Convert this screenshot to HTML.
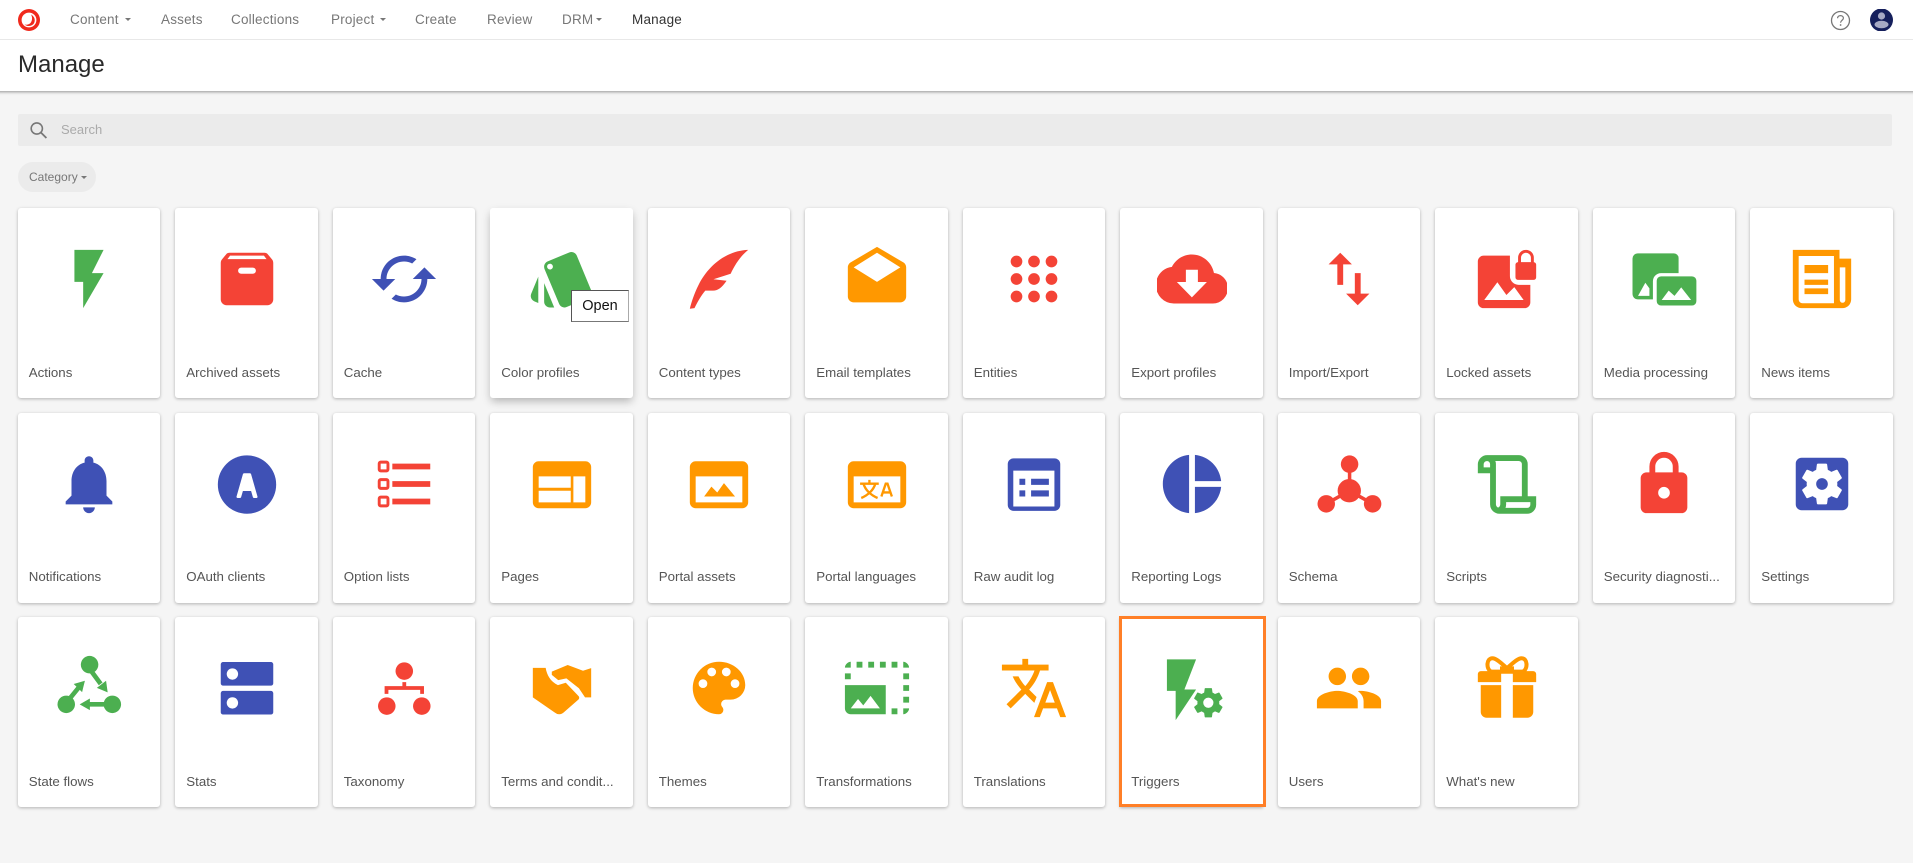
<!DOCTYPE html>
<html><head><meta charset="utf-8"><title>Manage</title>
<style>
html,body{margin:0;padding:0;width:1913px;height:863px;overflow:hidden;background:#f5f5f5;font-family:"Liberation Sans",sans-serif}
.top{position:absolute;left:0;top:0;width:1913px;height:39px;background:#fff;border-bottom:1px solid #e8e8e8}
.nav{position:absolute;top:10px;line-height:19px;font-size:13.5px;letter-spacing:.2px;color:#777;white-space:nowrap}
.caret{position:absolute;width:0;height:0;border-left:3px solid transparent;border-right:3px solid transparent;border-top:3px solid #777}
.bar{position:absolute;left:-6px;top:40px;width:1925px;height:51px;background:#fff;box-shadow:0 2px 3px -1px rgba(0,0,0,.4)}
.title{position:absolute;left:18px;top:49px;font-size:24px;line-height:32px;color:#2a2a2a}
.search{position:absolute;left:18px;top:114px;width:1874px;height:32px;background:#ebebeb;border-radius:2px}
.ph{position:absolute;left:61px;top:121px;font-size:13px;line-height:18px;color:#aaa}
.pill{position:absolute;left:18px;top:162px;width:78px;height:30px;border-radius:15px;background:#ebebeb}
.cat{position:absolute;left:29px;top:168px;font-size:12px;line-height:18px;color:#777}
.grid{position:absolute;left:17.75px;top:208px;width:1875px;display:grid;grid-template-columns:repeat(12,142.5px);column-gap:15px;grid-auto-rows:190px;row-gap:14.5px}
.card{position:relative;background:#fff;border-radius:3px;box-shadow:0 1px 3px rgba(0,0,0,.28)}
.card svg{position:absolute;left:36.25px;top:36px;width:70px;height:70px}
.card span{position:absolute;left:11px;top:156px;font-size:13.3px;line-height:18px;color:#555;white-space:nowrap}
.card:nth-child(n+13):nth-child(-n+24) span{top:155px}
.hov{box-shadow:0 4px 9px -1px rgba(0,0,0,.28)}
.sel{border-radius:0}
.sel i{position:absolute;left:-1px;top:-1px;width:147px;height:191px;box-sizing:border-box;border:3px solid #ff7f27}
.g{fill:#4caf50}.r{fill:#f44336}.b{fill:#3f51b5}.o{fill:#ff9800}
.tip{position:absolute;left:571px;top:290px;width:56px;height:30px;background:#fff;border:1px solid #555;border-right-color:#aaa;border-bottom-color:#777;font-size:14.5px;line-height:30px;color:#111;text-align:center}
</style></head><body>
<div class="bar"></div>
<div class="top"></div>
<svg style="position:absolute;left:18px;top:9px" width="22" height="22" viewBox="0 0 22 22"><circle cx="11" cy="11" r="11" fill="#f02a1d"/><circle cx="11" cy="11" r="7.4" fill="#fff"/><path d="M13 5.5C14.5 8 14.5 11.5 12.5 14C11 15.6 8.5 16 6.5 15.5C9 17.7 13 17.6 15.5 15C17.8 12 17 7.6 13 5.5Z" fill="#f02a1d"/></svg>
<div class="nav" style="left:70px">Content</div><i class="caret" style="left:125px;top:18px"></i>
<div class="nav" style="left:161px">Assets</div>
<div class="nav" style="left:231px">Collections</div>
<div class="nav" style="left:331px">Project</div><i class="caret" style="left:380px;top:18px"></i>
<div class="nav" style="left:415px">Create</div>
<div class="nav" style="left:487px">Review</div>
<div class="nav" style="left:562px">DRM</div><i class="caret" style="left:596px;top:18px"></i>
<div class="nav" style="left:632px;color:#333">Manage</div>
<svg style="position:absolute;left:1830px;top:10px" width="21" height="21" viewBox="0 0 21 21"><circle cx="10.5" cy="10.5" r="9" fill="none" stroke="#777" stroke-width="1.3"/><path d="M7.6 8.2C7.6 6.5 9 5.6 10.5 5.6C12.1 5.6 13.4 6.6 13.4 8.1C13.4 10.2 10.6 10.3 10.6 12.7" fill="none" stroke="#777" stroke-width="1.2"/><circle cx="10.6" cy="15" r=".9" fill="#777"/></svg>
<svg style="position:absolute;left:1870px;top:9px" width="23" height="22" viewBox="0 0 23 22"><circle cx="11.5" cy="11" r="11.5" fill="#151f5c"/><circle cx="11.5" cy="7" r="3.6" fill="#a6a9c4"/><ellipse cx="11.5" cy="15.5" rx="7" ry="3.7" fill="#a6a9c4"/></svg>
<div class="title">Manage</div>
<div class="search"></div>
<svg style="position:absolute;left:29px;top:121px" width="19" height="18" viewBox="0 0 19 18"><circle cx="7.8" cy="7.5" r="5.6" fill="none" stroke="#777" stroke-width="1.6"/><path d="M12 11.6L17.4 17" stroke="#777" stroke-width="1.8"/></svg>
<div class="ph">Search</div>
<div class="pill"></div><div class="cat">Category</div><i class="caret" style="left:81px;top:176px"></i>

<div class="grid">
<div class="card"><svg viewBox="0 0 24 24"><path class="g" d="M7,2V13H10V22L17,10H13L17,2H7Z"/></svg><span>Actions</span></div>
<div class="card"><svg viewBox="0 0 24 24"><path class="r" fill-rule="evenodd" d="M20.54,5.23L19.15,3.55C18.88,3.21 18.47,3 18,3H6C5.53,3 5.12,3.21 4.84,3.55L3.46,5.23C3.17,5.57 3,6 3,6.5V19A2,2 0 0,0 5,21H19A2,2 0 0,0 21,19V6.5C21,6 20.83,5.57 20.54,5.23M5.3,5.2L6.2,4H17.8L18.7,5.2H5.3ZM10,8.1H14A1,1 0 0 1 14,10.2H10A1,1 0 0 1 10,8.1Z"/></svg><span>Archived assets</span></div>
<div class="card"><svg viewBox="0 0 24 24"><path class="b" d="M19 8l-4 4h3c0 3.31-2.69 6-6 6-1.01 0-1.97-.25-2.8-.7l-1.46 1.46C8.97 19.54 10.43 20 12 20c4.42 0 8-3.58 8-8h3l-4-4zM6 12c0-3.31 2.69-6 6-6 1.01 0 1.97.25 2.8.7l1.46-1.46C15.03 4.46 13.57 4 12 4c-4.42 0-8 3.58-8 8H1l4 4 4-4H6z"/></svg><span>Cache</span></div>
<div class="card hov"><svg viewBox="0 0 24 24"><path class="g" d="M2.53,19.65L3.87,20.21V11.18L1.44,17.04C1.03,18.06 1.5,19.23 2.53,19.65M22.03,15.95L17.07,4C16.76,3.23 16.03,2.77 15.26,2.75C15,2.75 14.73,2.79 14.47,2.9L7.1,5.95C6.35,6.26 5.89,6.97 5.87,7.75C5.86,8 5.91,8.29 6,8.55L11,20.5C11.29,21.28 12.03,21.74 12.81,21.75C13.07,21.75 13.33,21.7 13.58,21.6L20.94,18.55C21.96,18.13 22.45,16.96 22.03,15.95M7.88,8.75A1,1 0 0,1 6.88,7.75A1,1 0 0,1 7.88,6.75C8.43,6.75 8.88,7.2 8.88,7.75C8.88,8.3 8.43,8.75 7.88,8.75M5.88,19.75A2,2 0 0,0 7.88,21.75H9.33L5.88,13.41V19.75Z"/></svg><span>Color profiles</span></div>
<div class="card"><svg viewBox="0 0 24 24"><path class="r" d="M22,2C14,2.3 8,8 5,14C3.5,17 2.5,20 2,22.2L3.6,22C4.8,19.6 6,17.5 7.3,16H10C11.5,16 13,15 14.6,12.6L10.1,12.1L16,10.2C17.5,7 19.5,4 22,2Z"/></svg><span>Content types</span></div>
<div class="card"><svg viewBox="0 0 24 24"><path class="o" fill-rule="evenodd" d="M4,8L12,13L20,8L12,3L4,8ZM22,8V18A2,2 0 0,1 20,20H4A2,2 0 0,1 2,18V8C2,7.27 2.39,6.64 2.97,6.29L12,1L21.03,6.29C21.61,6.64 22,7.27 22,8Z"/></svg><span>Email templates</span></div>
<div class="card"><svg viewBox="0 0 24 24"><g class="r"><circle cx="6" cy="6" r="2"/><circle cx="12" cy="6" r="2"/><circle cx="18" cy="6" r="2"/><circle cx="6" cy="12" r="2"/><circle cx="12" cy="12" r="2"/><circle cx="18" cy="12" r="2"/><circle cx="6" cy="18" r="2"/><circle cx="12" cy="18" r="2"/><circle cx="18" cy="18" r="2"/></g></svg><span>Entities</span></div>
<div class="card"><svg viewBox="0 0 24 24"><path class="r" fill-rule="evenodd" transform="translate(-.4 -.6) scale(1.03 1.05)" d="M17,13L12,18L7,13H10V9H14V13H17ZM19.35,10.03C18.67,6.59 15.64,4 12,4C9.11,4 6.6,5.64 5.35,8.03C2.34,8.36 0,10.9 0,14A6,6 0 0,0 6,20H19A5,5 0 0,0 24,15C24,12.36 21.95,10.22 19.35,10.03Z"/></svg><span>Export profiles</span></div>
<div class="card"><svg viewBox="0 0 24 24"><path class="r" d="M9 3L5 6.99h3V14h2V6.99h3L9 3zm7 14.01V10h-2v7.01h-3L15 21l4-3.99h-3z"/></svg><span>Import/Export</span></div>
<div class="card"><svg viewBox="0 0 24 24"><path class="r" fill-rule="evenodd" d="M4,4H13V11A3,3 0 0 0 16,14H20V20A2,2 0 0 1 18,22H4A2,2 0 0 1 2,20V6A2,2 0 0 1 4,4ZM4.2,19.2H17.7L14.5,14.8L11.8,17.5L8.7,13.1Z"/><rect class="r" x="14.9" y="6.2" width="7.1" height="6.1" rx=".9"/><path d="M16.3,6.5V4.7a2.2,2.2 0 0 1 4.4,0V6.5" fill="none" stroke="#f44336" stroke-width="1"/></svg><span>Locked assets</span></div>
<div class="card"><svg viewBox="0 0 24 24"><path class="g" fill-rule="evenodd" d="M3,3.2H15.4A1.6,1.6 0 0 1 17,4.8V10H11A2.8,2.8 0 0 0 8.2,12.8V19H3A1.8,1.8 0 0 1 1.2,17.2V5A1.8,1.8 0 0 1 3,3.2ZM3.1,17.8H7V15.2L5.6,13.3Z"/><path class="g" fill-rule="evenodd" d="M11,11.1H21.6A1.5,1.5 0 0 1 23.1,12.6V19.6A1.5,1.5 0 0 1 21.6,21.1H11A1.5,1.5 0 0 1 9.5,19.6V12.6A1.5,1.5 0 0 1 11,11.1ZM11.2,19.2H21.3L17.9,14.85L15.6,17.8L13.6,16Z"/></svg><span>Media processing</span></div>
<div class="card"><svg viewBox="0 0 24 24"><path class="o" fill-rule="evenodd" d="M2,2H18V5H22V19A3,3 0 0 1 19,22H5A3,3 0 0 1 2,19ZM4,4.1V19A1.3,1.3 0 0 0 5.3,20.3H16.1V4.1ZM18.1,8V19.2A.95,.95 0 0 0 20,19.2V8ZM6,7.2H14.1V10H6ZM6,12.2H14.1V14H6ZM6,15.2H14.1V17.2H6Z"/></svg><span>News items</span></div>

<div class="card"><svg viewBox="0 0 24 24"><path class="b" d="M12 22c1.1 0 2-.9 2-2h-4c0 1.1.89 2 2 2zm6-6v-5c0-3.07-1.64-5.64-4.5-6.32V4c0-.83-.67-1.5-1.5-1.5s-1.5.67-1.5 1.5v.68C7.63 5.36 6 7.92 6 11v5l-2 2v1h16v-1l-2-2z"/></svg><span>Notifications</span></div>
<div class="card"><svg viewBox="0 0 24 24"><circle class="b" cx="12" cy="12.2" r="10"/><path d="M11,8.7H13L15.2,16.4H14.4L13.7,14H10.3L9.6,16.4H8.8Z" fill="#fff" stroke="#fff" stroke-width=".8" stroke-linejoin="round"/></svg><span>OAuth clients</span></div>
<div class="card"><svg viewBox="0 0 24 24"><path class="r" fill-rule="evenodd" d="M21,19V17H8V19H21M21,13V11H8V13H21M8,7H21V5H8V7M4,5V7H6V5H4M3,5A1,1 0 0,1 4,4H6A1,1 0 0,1 7,5V7A1,1 0 0,1 6,8H4A1,1 0 0,1 3,7V5M4,11V13H6V11H4M3,11A1,1 0 0,1 4,10H6A1,1 0 0,1 7,11V13A1,1 0 0,1 6,14H4A1,1 0 0,1 3,13V11M4,17V19H6V17H4M3,17A1,1 0 0,1 4,16H6A1,1 0 0,1 7,17V19A1,1 0 0,1 6,20H4A1,1 0 0,1 3,19V17Z"/></svg><span>Option lists</span></div>
<div class="card"><svg viewBox="0 0 24 24"><path class="o" fill-rule="evenodd" d="M4,4.2H20A2,2 0 0 1 22,6.2V18.3A2,2 0 0 1 20,20.3H4A2,2 0 0 1 2,18.3V6.2A2,2 0 0 1 4,4.2ZM4,9.4V13.3H15V9.4ZM4,14.3V18.3H15V14.3ZM15.9,9.4V18.3H20V9.4Z"/></svg><span>Pages</span></div>
<div class="card"><svg viewBox="0 0 24 24"><path class="o" fill-rule="evenodd" d="M4,4.2H20A2,2 0 0 1 22,6.2V18.3A2,2 0 0 1 20,20.3H4A2,2 0 0 1 2,18.3V6.2A2,2 0 0 1 4,4.2ZM4,9.4V18.3H20V9.4ZM6.9,16.3L9.4,12.9L11.4,14.9L13.7,11.7L17.5,16.3Z"/></svg><span>Portal assets</span></div>
<div class="card"><svg viewBox="0 0 24 24"><path class="o" fill-rule="evenodd" d="M4,4.2H20A2,2 0 0 1 22,6.2V18.3A2,2 0 0 1 20,20.3H4A2,2 0 0 1 2,18.3V6.2A2,2 0 0 1 4,4.2ZM4,9.4V18.3H20V9.4Z"/><path d="M6.2,11.9H12.6M9.4,10.6V11.9M7.4,12C8,14 9.8,15.8 12.2,16.8M11.4,12C10.8,14 9,15.8 6.6,16.8M13.5,16.3L15,11.9H15.6L17.1,16.3M14.1,14.9H16.5" fill="none" stroke="#ff9800" stroke-width=".8"/></svg><span>Portal languages</span></div>
<div class="card"><svg viewBox="0 0 24 24"><path class="b" fill-rule="evenodd" d="M5,3.2H19A2,2 0 0 1 21,5.2V19.2A2,2 0 0 1 19,21.2H5A2,2 0 0 1 3,19.2V5.2A2,2 0 0 1 5,3.2ZM4.9,7.4V19.7H19V7.4ZM7,10.2H9V12.3H7ZM11,10.2H17.1V12.3H11ZM7,14.2H9V16.3H7ZM11,14.2H17.1V16.3H11Z"/></svg><span>Raw audit log</span></div>
<div class="card"><svg viewBox="0 0 24 24"><path class="b" d="M11,2V22C5.9,21.5 2,17.2 2,12C2,6.8 5.9,2.5 11,2M13,2V11H22C21.5,6.2 17.8,2.5 13,2M13,13V22C17.7,21.5 21.5,17.8 22,13H13Z"/></svg><span>Reporting Logs</span></div>
<div class="card"><svg viewBox="0 0 24 24"><g class="r"><circle cx="12.2" cy="5.2" r="3"/><circle cx="12.1" cy="14.3" r="4"/><circle cx="4.2" cy="18.8" r="3"/><circle cx="20.1" cy="18.8" r="3"/></g><path d="M12.2,5.2V14.3L4.2,18.8M12.1,14.3L20.1,18.8" fill="none" stroke="#f44336" stroke-width="1.2"/></svg><span>Schema</span></div>
<div class="card"><svg viewBox="0 0 24 24"><path d="M7.2,7.3H3V5.2A2.2,2.2 0 0 1 5.2,3.1H16A2.1,2.1 0 0 1 18.1,5.2V17M5.2,3.1A2.1,2.1 0 0 1 7.2,5.2V19A2.2,2.2 0 0 0 9.4,21.2H18.9A2.1,2.1 0 0 0 21,19.1V17.2H10.7V19A2.2,2.2 0 0 1 8.7,21.2" fill="none" stroke="#4caf50" stroke-width="2"/></svg><span>Scripts</span></div>
<div class="card"><svg viewBox="0 0 24 24"><path class="r" d="M12,17A2,2 0 0,0 14,15C14,13.89 13.1,13 12,13A2,2 0 0,0 10,15A2,2 0 0,0 12,17M18,8A2,2 0 0,1 20,10V20A2,2 0 0,1 18,22H6A2,2 0 0,1 4,20V10C4,8.89 4.9,8 6,8H7V6A5,5 0 0,1 12,1A5,5 0 0,1 17,6V8H18M12,3A3,3 0 0,0 9,6V8H15V6A3,3 0 0,0 12,3Z"/></svg><span>Security diagnosti...</span></div>
<div class="card"><svg viewBox="0 0 24 24"><path class="b" fill-rule="evenodd" d="M17.25,12C17.25,12.23 17.23,12.46 17.2,12.68L18.68,13.84C18.81,13.95 18.85,14.13 18.76,14.29L17.36,16.71C17.27,16.86 17.09,16.92 16.93,16.86L15.19,16.16C14.83,16.44 14.43,16.67 14,16.85L13.75,18.7C13.72,18.87 13.57,19 13.4,19H10.6C10.43,19 10.28,18.87 10.25,18.7L10,16.85C9.56,16.67 9.17,16.44 8.81,16.16L7.07,16.86C6.91,16.92 6.73,16.86 6.64,16.71L5.24,14.29C5.15,14.13 5.19,13.95 5.32,13.84L6.8,12.68C6.77,12.46 6.75,12.23 6.75,12C6.75,11.77 6.77,11.54 6.8,11.32L5.32,10.16C5.19,10.05 5.15,9.86 5.24,9.71L6.64,7.29C6.73,7.13 6.91,7.07 7.07,7.13L8.81,7.84C9.17,7.56 9.56,7.32 10,7.15L10.25,5.29C10.28,5.13 10.43,5 10.6,5H13.4C13.57,5 13.72,5.13 13.75,5.29L14,7.15C14.43,7.32 14.83,7.56 15.19,7.84L16.93,7.13C17.09,7.07 17.27,7.13 17.36,7.29L18.76,9.71C18.85,9.86 18.81,10.05 18.68,10.16L17.2,11.32C17.23,11.54 17.25,11.77 17.25,12M19,3H5C3.89,3 3,3.89 3,5V19A2,2 0 0,0 5,21H19A2,2 0 0,0 21,19V5C21,3.89 20.1,3 19,3M12,10C10.89,10 10,10.89 10,12A2,2 0 0,0 12,14A2,2 0 0,0 14,12C14,10.89 13.1,10 12,10Z"/></svg><span>Settings</span></div>

<div class="card"><svg viewBox="0 0 24 24"><g class="g"><circle cx="12.2" cy="4" r="3"/><circle cx="4.2" cy="17.6" r="3"/><circle cx="20" cy="17.6" r="3"/><path d="M18.4,13.5L17.85,9.52L14.69,11.96Z"/><path d="M10.6,9.5L6.75,10.64L9.63,13.4Z"/><path d="M8.8,17.6L12.3,15.6V19.6Z"/></g><path d="M12.9,6.4L16,10.6M5.5,15.5L8.5,11.8M12,17.6H18" fill="none" stroke="#4caf50" stroke-width="1.6"/></svg><span>State flows</span></div>
<div class="card"><svg viewBox="0 0 24 24"><rect class="b" x="3" y="3.1" width="18" height="8.1" rx=".8"/><rect class="b" x="3" y="13" width="18" height="8.1" rx=".8"/><circle cx="7" cy="7.2" r="1.95" fill="#fff"/><circle cx="7" cy="17.1" r="1.95" fill="#fff"/></svg><span>Stats</span></div>
<div class="card"><svg viewBox="0 0 24 24"><g class="r"><circle cx="12.1" cy="6.2" r="3"/><circle cx="6.1" cy="18.2" r="3"/><circle cx="18.1" cy="18.2" r="3"/></g><path d="M12.1,10V12M6,14V12H18.2V14" fill="none" stroke="#f44336" stroke-width="1.3"/></svg><span>Taxonomy</span></div>
<div class="card"><svg viewBox="0 0 24 24"><path class="o" d="M2,5.1H6.4C6.8,7.5 8,9.8 10.6,11L13.3,10.2L17.4,14.5Q18.2,15.2 17.7,15.9L13,20Q11.2,21.8 9.5,20.4L2,15.2Z"/><path class="o" d="M8.5,6.4L13.95,4.1L19.2,6.1L22,5.2V15.2H19.9L17.8,12.1L13.5,8.7L10.7,9.3L8.5,7.5Z"/></svg><span>Terms and condit...</span></div>
<div class="card"><svg viewBox="0 0 24 24"><path class="o" d="M17.5,12A1.5,1.5 0 0,1 16,10.5A1.5,1.5 0 0,1 17.5,9A1.5,1.5 0 0,1 19,10.5A1.5,1.5 0 0,1 17.5,12M14.5,8A1.5,1.5 0 0,1 13,6.5A1.5,1.5 0 0,1 14.5,5A1.5,1.5 0 0,1 16,6.5A1.5,1.5 0 0,1 14.5,8M9.5,8A1.5,1.5 0 0,1 8,6.5A1.5,1.5 0 0,1 9.5,5A1.5,1.5 0 0,1 11,6.5A1.5,1.5 0 0,1 9.5,8M6.5,12A1.5,1.5 0 0,1 5,10.5A1.5,1.5 0 0,1 6.5,9A1.5,1.5 0 0,1 8,10.5A1.5,1.5 0 0,1 6.5,12M12,3A9,9 0 0,0 3,12A9,9 0 0,0 12,21A1.5,1.5 0 0,0 13.5,19.5C13.5,19.11 13.35,18.76 13.11,18.5C12.88,18.23 12.73,17.88 12.73,17.5A1.5,1.5 0 0,1 14.23,16H16A5,5 0 0,0 21,11C21,6.58 16.97,3 12,3Z"/></svg><span>Themes</span></div>
<div class="card"><svg viewBox="0 0 24 24"><path class="g" d="M21 15h2v2h-2v-2zm0-4h2v2h-2v-2zm2 8h-2v2c1 0 2-1 2-2zM13 3h2v2h-2V3zm8 4h2v2h-2V7zm0-4v2h2c0-1-1-2-2-2zM1 7h2v2H1V7zm16-4h2v2h-2V3zm0 16h2v2h-2v-2zM3 3C2 3 1 4 1 5h2V3zm6 0h2v2H9V3zM5 3h2v2H5V3zm-4 8v8c0 1.1.9 2 2 2h12V11H1zm2 8l2.5-3.21 1.79 2.15 2.5-3.22L13 19H3z"/></svg><span>Transformations</span></div>
<div class="card"><svg viewBox="0 0 24 24"><path class="o" d="M12.87,15.07L10.33,12.56L10.36,12.53C12.1,10.59 13.34,8.36 14.07,6H17V4H10V2H8V4H1V6H12.17C11.5,7.92 10.44,9.75 9,11.35C8.07,10.32 7.3,9.19 6.69,8H4.69C5.42,9.63 6.42,11.17 7.67,12.56L2.58,17.58L4,19L9,14L12.11,17.11L12.87,15.07M18.5,10H16.5L12,22H14L15.12,19H19.87L21,22H23L18.5,10M15.88,17L17.5,12.67L19.12,17H15.88Z"/></svg><span>Translations</span></div>
<div class="card sel"><i></i><svg viewBox="0 0 24 24"><path class="g" d="M3.4,2.2V13H6.4V23L13.4,12.5H9.4L13.4,2.2Z"/><path class="g" fill-rule="evenodd" transform="translate(11.6 11.05) scale(.5)" d="M12,15.5A3.5,3.5 0 0,1 8.5,12A3.5,3.5 0 0,1 12,8.5A3.5,3.5 0 0,1 15.5,12A3.5,3.5 0 0,1 12,15.5M19.43,12.97C19.47,12.65 19.5,12.33 19.5,12C19.5,11.67 19.47,11.34 19.43,11L21.54,9.37C21.73,9.22 21.78,8.95 21.66,8.73L19.66,5.27C19.54,5.05 19.27,4.96 19.05,5.05L16.56,6.05C16.04,5.66 15.5,5.32 14.87,5.07L14.5,2.42C14.46,2.18 14.25,2 14,2H10C9.75,2 9.54,2.18 9.5,2.42L9.13,5.07C8.5,5.32 7.96,5.66 7.44,6.05L4.95,5.05C4.73,4.96 4.46,5.05 4.34,5.27L2.34,8.73C2.21,8.95 2.27,9.22 2.46,9.37L4.57,11C4.53,11.34 4.5,11.67 4.5,12C4.5,12.33 4.53,12.65 4.57,12.97L2.46,14.63C2.27,14.78 2.21,15.05 2.34,15.27L4.34,18.73C4.46,18.95 4.73,19.03 4.95,18.94L7.44,17.94C7.96,18.34 8.5,18.68 9.13,18.93L9.5,21.58C9.54,21.82 9.75,22 10,22H14C14.25,22 14.46,21.82 14.5,21.58L14.87,18.93C15.5,18.67 16.04,18.34 16.56,17.94L19.05,18.94C19.27,19.03 19.54,18.95 19.66,18.73L21.66,15.27C21.78,15.05 21.73,14.78 21.54,14.63L19.43,12.97Z"/></svg><span>Triggers</span></div>
<div class="card"><svg viewBox="0 0 24 24"><path class="o" d="M16 11c1.66 0 2.99-1.34 2.99-3S17.66 5 16 5c-1.66 0-3 1.34-3 3s1.34 3 3 3zm-8 0c1.66 0 2.99-1.34 2.99-3S9.66 5 8 5C6.34 5 5 6.34 5 8s1.34 3 3 3zm0 2c-2.33 0-7 1.17-7 3.5V19h14v-2.5c0-2.33-4.67-3.5-7-3.5zm8 0c-.29 0-.62.02-.97.05 1.16.84 1.97 1.97 1.97 3.45V19h6v-2.5c0-2.33-4.67-3.5-7-3.5z"/></svg><span>Users</span></div>
<div class="card"><svg viewBox="0 0 24 24"><path class="o" d="M3,11H10V22.2H5A2,2 0 0 1 3,20.2ZM14,11H21V20.2A2,2 0 0 1 19,22.2H14ZM3,6.2H10V10H2V7.2A1,1 0 0 1 3,6.2ZM14,6.2H21A1,1 0 0 1 22,7.2V10H14ZM9.6,4.6H14.4V7H9.6Z"/><path d="M12,5.2C10.5,4 8.5,1.8 7,1.8C5,1.8 4.7,5.2 6.5,6.4H17.5C19.3,5.2 19,1.8 17,1.8C15.5,1.8 13.5,4 12,5.2Z" fill="none" stroke="#ff9800" stroke-width="1.4"/></svg><span>What's new</span></div>
</div>
<div class="tip">Open</div>
</body></html>
